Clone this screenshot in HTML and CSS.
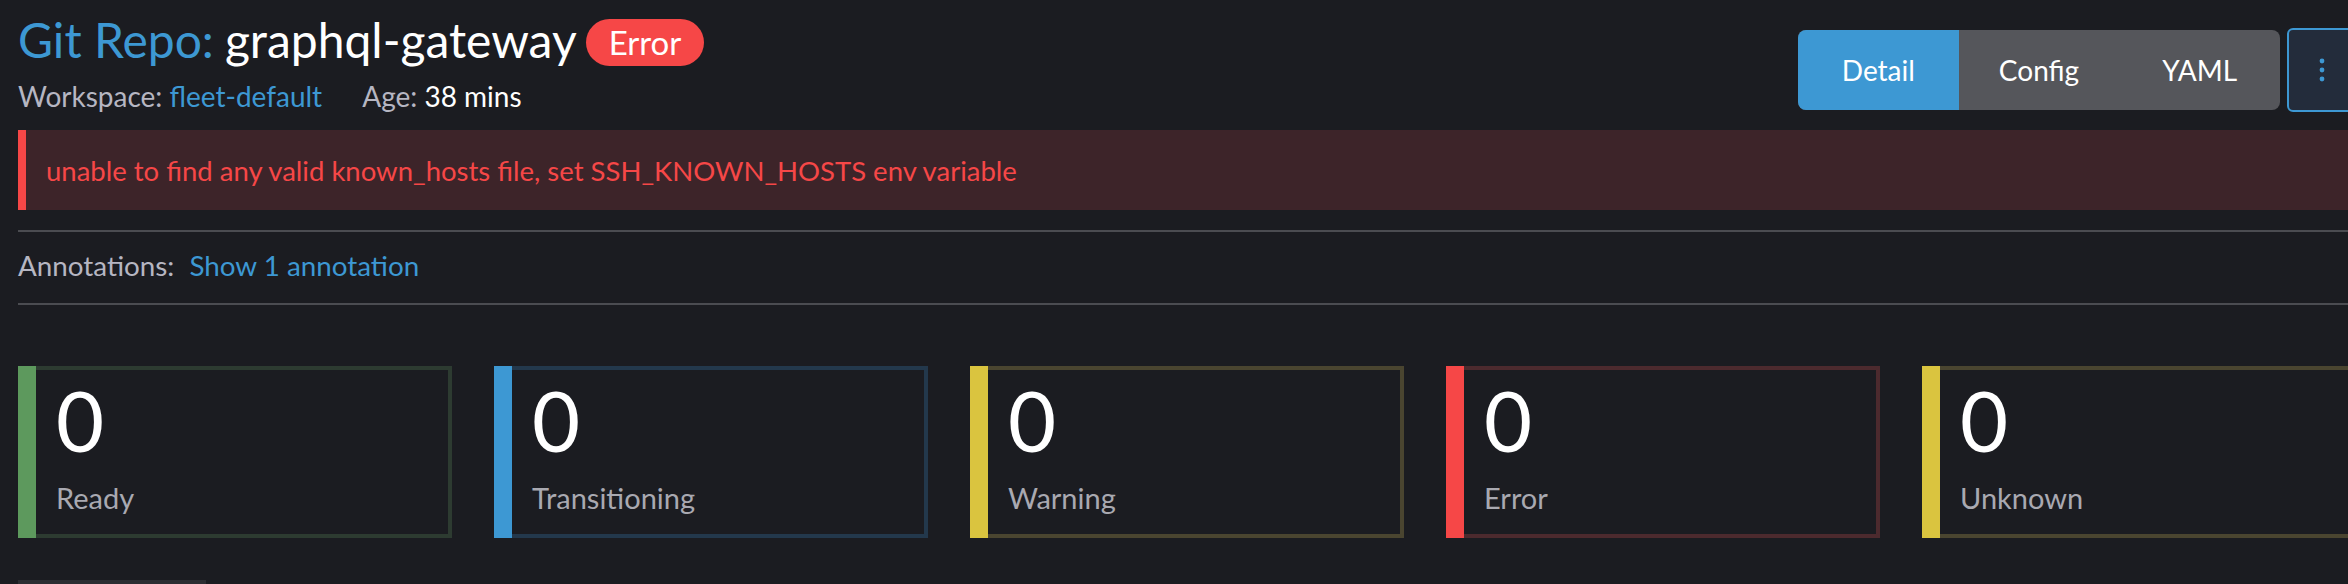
FILE: index.html
```html
<!DOCTYPE html>
<html lang="en">
<head>
    <meta charset="UTF-8">
    <title>Git Repo: graphql-gateway</title>
    <link rel="stylesheet" href="styles.css">
</head>
<body>
    <div class="page">
        <header class="masthead">
            <div class="title-block">
                <h1><span class="kind">Git Repo:</span> graphql-gateway <span class="badge">Error</span></h1>
                <div class="meta">
                    <span class="meta-item">Workspace: <a href="#">fleet-default</a></span>
                    <span class="meta-item">Age: <span class="value">38 mins</span></span>
                </div>
            </div>
            <div class="actions">
                <div class="btn-group">
                    <button class="active">Detail</button>
                    <button>Config</button>
                    <button>YAML</button>
                </div>
                <button class="kebab">
                    <svg width="10" height="30" viewBox="0 0 10 30">
                        <circle cx="5" cy="6" r="2.4" fill="#3d98d3"/>
                        <circle cx="5" cy="15" r="2.4" fill="#3d98d3"/>
                        <circle cx="5" cy="24" r="2.4" fill="#3d98d3"/>
                    </svg>
                </button>
            </div>
        </header>

        <div class="banner">unable to find any valid known_hosts file, set SSH_KNOWN_HOSTS env variable</div>

        <hr>
        <div class="annotations">Annotations: <a href="#">Show 1 annotation</a></div>
        <hr>

        <div class="counts">
            <div class="count ready">
                <div class="bar"></div>
                <div class="body"><div class="number">0</div><div class="label">Ready</div></div>
            </div>
            <div class="count transitioning">
                <div class="bar"></div>
                <div class="body"><div class="number">0</div><div class="label">Transitioning</div></div>
            </div>
            <div class="count warning">
                <div class="bar"></div>
                <div class="body"><div class="number">0</div><div class="label">Warning</div></div>
            </div>
            <div class="count error">
                <div class="bar"></div>
                <div class="body"><div class="number">0</div><div class="label">Error</div></div>
            </div>
            <div class="count unknown">
                <div class="bar"></div>
                <div class="body"><div class="number">0</div><div class="label">Unknown</div></div>
            </div>
        </div>

        <div class="tabs"><div class="tab"></div></div>
    </div>
</body>
</html>
```

FILE: styles.css
```css
body {
    font-family: Lato, 'Noto Sans', sans-serif;
    background-color: #1b1c21;
    color: #b6b6c2;
    margin: 0;
    overflow: hidden;
}
a {
    color: #3d98d3;
    text-decoration: none;
}
.page {
    width: 2338px;
    margin-left: 18px;
    padding-top: 12px;
}
.masthead {
    display: flex;
    justify-content: space-between;
    align-items: flex-start;
}
h1 {
    margin: 0;
    font-size: 48px;
    font-weight: 400;
    line-height: 56px;
    color: #fff;
    display: flex;
    align-items: center;
}
h1 .kind {
    color: #3d98d3;
    margin-right: 11px;
}
.badge {
    display: inline-block;
    background-color: #f64747;
    color: #fff;
    font-size: 33px;
    line-height: 47px;
    padding: 0 23px;
    border-radius: 24px;
    margin-left: 9px;
    margin-top: 4px;
}
.meta {
    margin-top: 11px;
    font-size: 28px;
    line-height: 34px;
    display: flex;
    gap: 40px;
}
.meta .value {
    color: #fff;
}
.actions {
    display: flex;
    align-items: center;
    gap: 7px;
    margin-top: 16px;
}
.btn-group {
    display: flex;
    width: 482px;
    height: 80px;
    border-radius: 8px;
    overflow: hidden;
    background-color: #55565b;
}
.btn-group button {
    flex: 1;
    border: none;
    background: none;
    color: #fff;
    font-family: inherit;
    font-size: 28px;
    padding: 0;
    cursor: pointer;
}
.btn-group button.active {
    background-color: #3d98d3;
}
.kebab {
    width: 69px;
    height: 84px;
    box-sizing: border-box;
    border: 2px solid #3d98d3;
    border-radius: 6px;
    background-color: #232c3b;
    display: flex;
    align-items: center;
    justify-content: center;
    padding: 0;
}
.banner {
    margin-top: 17px;
    height: 80px;
    box-sizing: border-box;
    border-left: 8px solid #f64747;
    background-color: #3d2429;
    color: #f64747;
    font-size: 27.5px;
    padding-left: 20px;
    display: flex;
    align-items: center;
}
hr {
    border: none;
    height: 2px;
    background-color: #4b4c51;
    margin: 20px 0 0;
}
.annotations {
    margin-top: 17px;
    font-size: 27.8px;
    line-height: 34px;
}
.annotations a {
    margin-left: 8px;
}
.annotations + hr {
    margin-top: 20px;
}
.counts {
    margin-top: 61px;
    display: grid;
    grid-template-columns: repeat(5, 1fr);
    gap: 42px;
}
.count {
    height: 172px;
    display: flex;
}
.count .bar {
    width: 18px;
    background-color: #5d995d;
}
.count .body {
    flex: 1;
    box-sizing: border-box;
    border: 4px solid #2d3b31;
    border-left: none;
    padding: 8px 0 0 20px;
}
.count .number {
    font-size: 83px;
    line-height: 84px;
    color: #fff;
}
.count .label {
    margin-top: 19px;
    font-size: 29px;
    line-height: 34px;
    color: #a9a9b1;
}
.count.transitioning .bar { background-color: #3d98d3; }
.count.transitioning .body { border-color: #23384c; }
.count.warning .bar,
.count.unknown .bar { background-color: #dac43f; }
.count.warning .body,
.count.unknown .body { border-color: #4a4530; }
.count.error .bar { background-color: #f64747; }
.count.error .body { border-color: #4c2a2e; }
.tabs {
    margin-top: 42px;
}
.tab {
    width: 188px;
    height: 20px;
    background-color: #2c2d32;
}
```
